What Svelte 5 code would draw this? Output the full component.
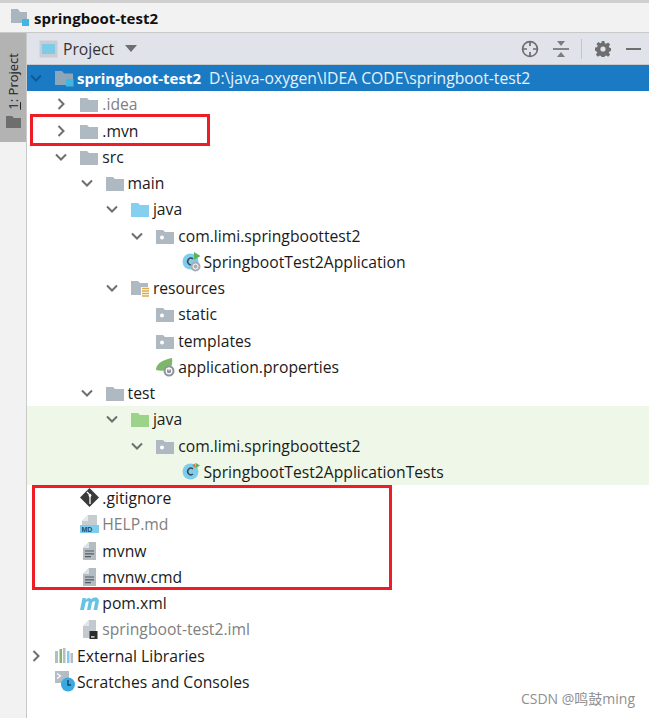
<script>
  const rows = [
    { d: 0, arrow: 'down', icon: 'root', name: 'springboot-test2', path: 'D:\\java-oxygen\\IDEA CODE\\springboot-test2', sel: true },
    { d: 1, arrow: 'right', icon: 'folder', name: '.idea', dim: true },
    { d: 1, arrow: 'right', icon: 'folder', name: '.mvn' },
    { d: 1, arrow: 'down', icon: 'folder', name: 'src' },
    { d: 2, arrow: 'down', icon: 'folder', name: 'main' },
    { d: 3, arrow: 'down', icon: 'blue', name: 'java' },
    { d: 4, arrow: 'down', icon: 'pkg', name: 'com.limi.springboottest2' },
    { d: 5, icon: 'boot', name: 'SpringbootTest2Application' },
    { d: 3, arrow: 'down', icon: 'res', name: 'resources' },
    { d: 4, icon: 'pkg', name: 'static' },
    { d: 4, icon: 'pkg', name: 'templates' },
    { d: 4, icon: 'props', name: 'application.properties' },
    { d: 2, arrow: 'down', icon: 'folder', name: 'test' },
    { d: 3, arrow: 'down', icon: 'green', name: 'java', test: true },
    { d: 4, arrow: 'down', icon: 'pkg', name: 'com.limi.springboottest2', test: true },
    { d: 5, icon: 'testc', name: 'SpringbootTest2ApplicationTests', test: true },
    { d: 1, icon: 'git', name: '.gitignore' },
    { d: 1, icon: 'md', name: 'HELP.md', dim: true },
    { d: 1, icon: 'text', name: 'mvnw' },
    { d: 1, icon: 'text', name: 'mvnw.cmd' },
    { d: 1, icon: 'maven', name: 'pom.xml' },
    { d: 1, icon: 'iml', name: 'springboot-test2.iml', dim: true },
    { d: 0, arrow: 'right', icon: 'libs', name: 'External Libraries' },
    { d: 0, icon: 'scratch', name: 'Scratches and Consoles' }
  ];
  const folder = 'M0 3h7l2 2h9v12H0z';
</script>

<div class="window">
  <header class="crumb">
    <svg width="20" height="20" viewBox="0 0 20 20">
      <path d="M1 1h7l2 3h7v11H1z" fill="#a9b6bf" />
      <rect x="12" y="11" width="7" height="7" fill="#40b6e0" />
    </svg>
    <strong>springboot-test2</strong>
  </header>
  <div class="body">
    <aside class="rail">
      <div class="tab">
        <span class="tabtext"><u>1</u>: Project</span>
        <svg width="15" height="13" viewBox="0 0 15 13"><path d="M0 0h6l2 2h7v10H0z" fill="#6e6e6e" /></svg>
      </div>
    </aside>
    <main class="panel">
      <div class="toolbar">
        <svg class="view" width="19" height="18" viewBox="0 0 19 18">
          <rect x="0.5" y="0.5" width="18" height="17" fill="#c9cdd3" />
          <rect x="3" y="4" width="13" height="10" fill="#7ecbe8" />
        </svg>
        <span class="title">Project</span>
        <svg class="caret" width="12" height="7" viewBox="0 0 12 7"><path d="M0 0h12L6 7z" fill="#6e6e6e" /></svg>
        <span class="spacer"></span>
        <svg width="18" height="18" viewBox="0 0 18 18" fill="none" stroke="#6e6e6e" stroke-width="1.7">
          <circle cx="9" cy="9" r="7.4" />
          <path d="M9 1v5M9 12v5M1 9h5M12 9h5" />
        </svg>
        <svg class="gap-a" width="16" height="16" viewBox="0 0 16 16">
          <path d="M0 7.2h16v1.6H0z" fill="#6e6e6e" />
          <path d="M4 0h8L8 5zM4 16h8L8 11z" fill="#7d7d7d" />
        </svg>
        <span class="sep"></span>
        <svg class="gap-b" width="16" height="16" viewBox="0 0 16 16">
          <path d="M6.600 0h2.800l.4 2.200 1.400.6 1.900-1.300 2 2-1.300 1.900.6 1.400 2.100.4v2.800l-2.100.4-.6 1.400 1.300 1.900-2 2-1.900-1.300-1.400.6-.4 2.100H6.600l-.4-2.100-1.400-.6-1.900 1.300-2-2 1.300-1.900-.6-1.400L0 9.400V6.600l2.100-.4.6-1.400L1.400 2.900l2-2 1.900 1.300 1.400-.6z" fill="#6e6e6e" />
          <circle cx="8" cy="8" r="2.600" fill="#e0e3ea" />
        </svg>
        <svg class="gap-c" width="15" height="2" viewBox="0 0 15 2"><rect width="15" height="2" fill="#6e6e6e" /></svg>
      </div>

      <div class="tree">
        {#each rows as r}
          <div class="row" class:sel={r.sel} class:test={r.test} style="padding-left: {r.d * 25.3}px">
            <span class="arrow">
              {#if r.arrow === 'down'}
                <svg width="12" height="12" viewBox="0 0 12 12" fill="none" stroke={r.sel ? '#0f5a94' : '#6e6e6e'} stroke-width="2"><path d="M1 3.500l5 5 5-5" /></svg>
              {:else if r.arrow === 'right'}
                <svg width="12" height="12" viewBox="0 0 12 12" fill="none" stroke="#6e6e6e" stroke-width="2"><path d="M3.500 1l5 5-5 5" /></svg>
              {/if}
            </span>
            <span class="icon">
              {#if r.icon === 'root'}
                <svg width="19" height="19" viewBox="0 0 19 19">
                  <path d="M0 2h7l2 2.500h9V16H0z" fill="#8fa6b8" />
                  <rect x="11" y="10" width="7.500" height="7.500" fill="#40b6e0" />
                </svg>
              {:else if r.icon === 'folder'}
                <svg width="18" height="18" viewBox="0 0 18 18"><path d={folder} fill="#afb9c2" /></svg>
              {:else if r.icon === 'blue'}
                <svg width="18" height="18" viewBox="0 0 18 18"><path d={folder} fill="#85d0ee" /></svg>
              {:else if r.icon === 'green'}
                <svg width="18" height="18" viewBox="0 0 18 18"><path d={folder} fill="#9bd38a" /></svg>
              {:else if r.icon === 'pkg'}
                <svg width="18" height="18" viewBox="0 0 18 18"><path d={folder} fill="#afb9c2" /><circle cx="6" cy="10.500" r="2" fill="#fff" /></svg>
              {:else if r.icon === 'res'}
                <svg width="20" height="20" viewBox="0 0 20 20">
                  <path d="M0 3h7l2 2h8v12H0z" fill="#afb9c2" />
                  <rect x="10" y="9" width="9" height="10" fill="#fff" />
                  <path d="M11 10.500h7M11 13h7M11 15.500h7M11 18h7" stroke="#e0a94a" stroke-width="1.300" />
                </svg>
              {:else if r.icon === 'boot'}
                <svg width="20" height="20" viewBox="0 0 20 20">
                  <circle cx="8.500" cy="9.500" r="8" fill="#7fcdec" />
                  <path d="M11 6.800a3.300 3.300 0 1 0 0 5.200" fill="none" stroke="#3a4a55" stroke-width="1.500" />
                  <path d="M12 0l6.500 4L12 8z" fill="#57b45a" />
                  <circle cx="13.500" cy="14.500" r="5" fill="#a7adb3" />
                  <circle cx="13.500" cy="14.500" r="2.500" fill="none" stroke="#fff" stroke-width="1" />
                </svg>
              {:else if r.icon === 'testc'}
                <svg width="20" height="20" viewBox="0 0 20 20">
                  <circle cx="8.500" cy="9.500" r="8" fill="#7fcdec" />
                  <path d="M11 6.800a3.300 3.300 0 1 0 0 5.200" fill="none" stroke="#3a4a55" stroke-width="1.500" />
                  <path d="M10 3.500L13.500 1v5z" fill="#e0764a" />
                  <path d="M14 1l4 2.500L14 6z" fill="#57b45a" />
                </svg>
              {:else if r.icon === 'props'}
                <svg width="20" height="20" viewBox="0 0 20 20">
                  <path d="M0 13C0 7 6 3 16 1c1 7-1 11-5 12-4 1-7 1-11 0z" fill="#7db76a" />
                  <circle cx="13" cy="14" r="5.500" fill="#8c959c" />
                  <circle cx="13" cy="14" r="2.800" fill="none" stroke="#fff" stroke-width="1.200" />
                  <path d="M13 10.500v3" stroke="#fff" stroke-width="1.200" />
                </svg>
              {:else if r.icon === 'git'}
                <svg width="20" height="20" viewBox="0 0 20 20">
                  <path d="M9.500 0l9.500 9.500-9.500 9.500L0 9.500z" fill="#3a3a3a" />
                  <path d="M7 4l3 3v9" stroke="#fff" stroke-width="1.300" fill="none" />
                  <circle cx="10" cy="7.500" r="1.400" fill="#fff" />
                </svg>
              {:else if r.icon === 'md'}
                <svg width="20" height="20" viewBox="0 0 20 20">
                  <path d="M8 1h9v10H2V7z" fill="#c7ccd1" />
                  <path d="M2 7l6-6v6z" fill="#e6e8ea" />
                  <rect y="11" width="19" height="8" fill="#7fcdec" />
                  <text x="1.500" y="17.800" class="mdtext">MD</text>
                </svg>
              {:else if r.icon === 'text'}
                <svg width="20" height="20" viewBox="0 0 20 20">
                  <path d="M9 1h7v18H3V7z" fill="#b4bcc3" />
                  <path d="M3 7l6-6v6z" fill="#dfe2e5" />
                  <path d="M5 10h9M5 12.800h9M5 15.600h6" stroke="#555d63" stroke-width="1.200" />
                </svg>
              {:else if r.icon === 'maven'}
                <svg width="20" height="20" viewBox="0 0 20 20">
                  <path d="M0 17L2.500 5h3.500l-.5 2C7.500 4.700 10 4.200 11 6.500 13 4.200 17.500 3.800 18.500 6.500l.5 1.500-1.800 9h-3.700l1.700-8.500c-1.500-1-3 .5-3.300 1.700L10.500 17H7l1.700-8.500C7 7.500 5.800 9 5.400 10.500L4 17z" fill="#67c3e6" />
                </svg>
              {:else if r.icon === 'iml'}
                <svg width="20" height="20" viewBox="0 0 20 20">
                  <path d="M9 1h7v18H3V7z" fill="#c3c9ce" />
                  <path d="M3 7l6-6v6z" fill="#e3e5e8" />
                  <rect x="9.500" y="12" width="8" height="8" fill="#2c2c2c" />
                  <rect x="11" y="17.300" width="3.500" height="1.200" fill="#fff" />
                </svg>
              {:else if r.icon === 'libs'}
                <svg width="19" height="18" viewBox="0 0 19 18">
                  <rect x="0" y="4" width="3" height="12" fill="#b5bdc4" />
                  <rect x="4.500" y="2" width="2.500" height="14" fill="#7db76a" />
                  <rect x="8" y="1" width="2.500" height="15" fill="#b5bdc4" />
                  <rect x="12" y="4" width="2.500" height="12" fill="#7fcdec" />
                  <rect x="15.500" y="6" width="2.500" height="10" fill="#b5bdc4" />
                </svg>
              {:else if r.icon === 'scratch'}
                <svg width="20" height="21" viewBox="0 0 20 21">
                  <rect x="0" y="0" width="14" height="12" fill="#b5bdc4" />
                  <path d="M2 2.500l3.500 2.500L2 7.500" fill="none" stroke="#fff" stroke-width="1.200" />
                  <circle cx="13" cy="13.500" r="7" fill="#39a9e0" />
                  <path d="M13 9V14h3" fill="none" stroke="#15456a" stroke-width="1.400" />
                </svg>
              {/if}
            </span>
            <span class="name" class:dim={r.dim}>{r.name}</span>
            {#if r.path}<span class="path">{r.path}</span>{/if}
          </div>
        {/each}
      </div>
    </main>
  </div>
  <div class="mark mark-a"></div>
  <div class="mark mark-b"></div>
  <div class="watermark">CSDN @鸣鼓ming</div>
</div>

<style>
  :global(body) { margin: 0; background: #fff; }
  .window {
    position: relative;
    width: 649px;
    height: 718px;
    overflow: hidden;
    font-family: "Open Sans", "Noto Sans", "Noto Sans CJK SC", sans-serif;
    font-size: 15.7px;
    color: #1a1a1a;
    background: #fff;
  }
  .crumb {
    box-sizing: border-box;
    height: 33px;
    border-top: 3px solid #cfcfcf;
    border-bottom: 1px solid #c9c9c9;
    background: #f2f2f2;
    display: flex;
    align-items: center;
    gap: 4px;
    padding-left: 10px;
  }
  .crumb strong { font-size: 15px; font-weight: 700; color: #111; }
  .body { display: flex; height: 685px; }
  .rail {
    box-sizing: border-box;
    width: 27px;
    flex: none;
    background: #f2f2f2;
    border-right: 1px solid #c9c9c9;
  }
  .tab {
    height: 109px;
    width: 26px;
    background: #b3b3b3;
    display: flex;
    flex-direction: column;
    align-items: center;
    justify-content: flex-end;
    gap: 6px;
    padding-bottom: 13px;
    box-sizing: border-box;
  }
  .tabtext {
    writing-mode: vertical-rl;
    transform: rotate(180deg);
    font-size: 13px;
    color: #222;
  }
  .panel { flex: 1; min-width: 0; }
  .toolbar {
    box-sizing: border-box;
    height: 32px;
    background: #e0e3ea;
    border-bottom: 1px solid #c9c9c9;
    display: flex;
    align-items: center;
    padding: 0 8px 0 12px;
  }
  .view { margin-right: 5px; }
  .title { font-size: 15.700px; color: #333; }
  .caret { margin-left: 11px; }
  .spacer { flex: 1; }
  .gap-a { margin-left: 14px; }
  .sep { width: 1px; height: 20px; background: #c3c5ca; margin-left: 12px; }
  .gap-b { margin-left: 13px; }
  .gap-c { margin-left: 15px; }
  .tree { display: flex; flex-direction: column; }
  .row {
    height: 26.25px;
    display: flex;
    align-items: center;
    white-space: nowrap;
    box-sizing: border-box;
  }
  .row.sel { background: #1a7bc4; color: #fff; }
  .row.sel .name { font-weight: 700; color: #fff; font-size: 15px; }
  .row.sel .path { color: #e8f2fa; margin-left: 8px; font-size: 15.700px; }
  .row.test { background: #eff8e8; }
  .arrow { width: 16px; flex: none; display: flex; align-items: center; justify-content: center; margin-left: 1px; }
  .icon { width: 20px; margin-left: 11px; flex: none; display: flex; align-items: center; }
  .name { margin-left: 2px; }
  .dim { color: #808080; }
  .mdtext { font-size: 7px; font-weight: 700; fill: #1d4e6b; font-family: "Liberation Sans", sans-serif; }
  .mark { position: absolute; border: 3px solid #ee1c25; box-sizing: border-box; }
  .mark-a { left: 30px; top: 114px; width: 180px; height: 32px; }
  .mark-b { left: 32px; top: 485px; width: 360px; height: 105px; }
  .watermark {
    position: absolute;
    right: 14px;
    bottom: 10px;
    font-size: 14px;
    color: #8f8f8f;
  }
</style>
